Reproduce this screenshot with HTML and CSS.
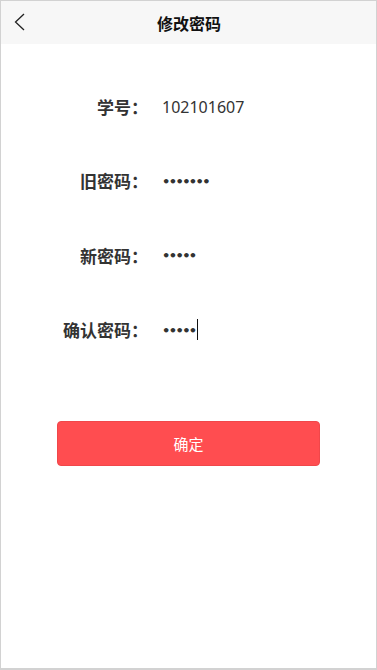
FILE: index.html
```html
<!DOCTYPE html>
<html lang="zh-CN">
<head>
<meta charset="utf-8">
<meta name="viewport" content="width=device-width, initial-scale=1">
<title>修改密码</title>
<link rel="stylesheet" href="styles.css">
</head>
<body>
<div class="page">
  <header class="nav">
    <span class="nav-back">
      <svg width="12" height="18" viewBox="0 0 12 18" aria-hidden="true">
        <polyline points="10,1 1.5,9 10,17" fill="none" stroke="#222" stroke-width="1.3"/>
      </svg>
    </span>
    <h1 class="nav-title">修改密码</h1>
  </header>
  <main class="form">
    <div class="row">
      <span class="label">学号：</span>
      <span class="value">102101607</span>
    </div>
    <div class="row">
      <span class="label">旧密码：</span>
      <span class="value dots">•••••••</span>
    </div>
    <div class="row">
      <span class="label">新密码：</span>
      <span class="value dots">•••••</span>
    </div>
    <div class="row">
      <span class="label">确认密码：</span>
      <span class="value dots">•••••</span><span class="caret"></span>
    </div>
    <button class="submit" type="button">确定</button>
  </main>
</div>
</body>
</html>
```

FILE: styles.css
```css
html, body {
  margin: 0;
  padding: 0;
  background: #fff;
}
body {
  font-family: "Noto Sans", "Noto Sans CJK SC", sans-serif;
  color: #333;
}
.page {
  box-sizing: border-box;
  width: 377px;
  height: 670px;
  border: 1px solid #d2d2d2;
  border-bottom: 2px solid #d2d2d2;
  display: flex;
  flex-direction: column;
}
.nav {
  position: relative;
  height: 43px;
  background: #f7f7f7;
  display: flex;
  align-items: center;
  justify-content: center;
}
.nav-back {
  position: absolute;
  left: 13px;
  top: 12px;
  width: 12px;
  height: 18px;
  display: flex;
}
.nav-title {
  margin: 0;
  font-family: "Noto Sans CJK SC", sans-serif;
  font-size: 16px;
  font-weight: 700;
  color: #111;
  line-height: 1;
  padding-left: 1px;
}
.form {
  display: flex;
  flex-direction: column;
  padding-top: 40px;
}
.row {
  display: flex;
  align-items: center;
  height: 44px;
  margin-bottom: 30.5px;
}
.label {
  box-sizing: border-box;
  width: 147px;
  text-align: right;
  font-family: "Noto Sans CJK SC", sans-serif;
  font-size: 17px;
  font-weight: 700;
  color: #333;
}
.value {
  margin-left: 14px;
  font-size: 16px;
  color: #333;
  line-height: 20px;
  padding-top: 2px;
}
.dots {
  font-family: "DejaVu Sans", sans-serif;
  font-size: 13px;
  font-weight: 700;
  letter-spacing: -1.6px;
}
.caret {
  display: inline-block;
  width: 1px;
  height: 21px;
  background: #111;
  margin-left: 1px;
}
.submit {
  align-self: center;
  width: 263px;
  height: 45px;
  margin-top: 39px;
  border: 1px solid #f0474a;
  border-radius: 4px;
  background: #ff4d50;
  color: #fff;
  font-family: "Noto Sans CJK SC", sans-serif;
  font-size: 15px;
  padding: 0;
  cursor: pointer;
}
```
